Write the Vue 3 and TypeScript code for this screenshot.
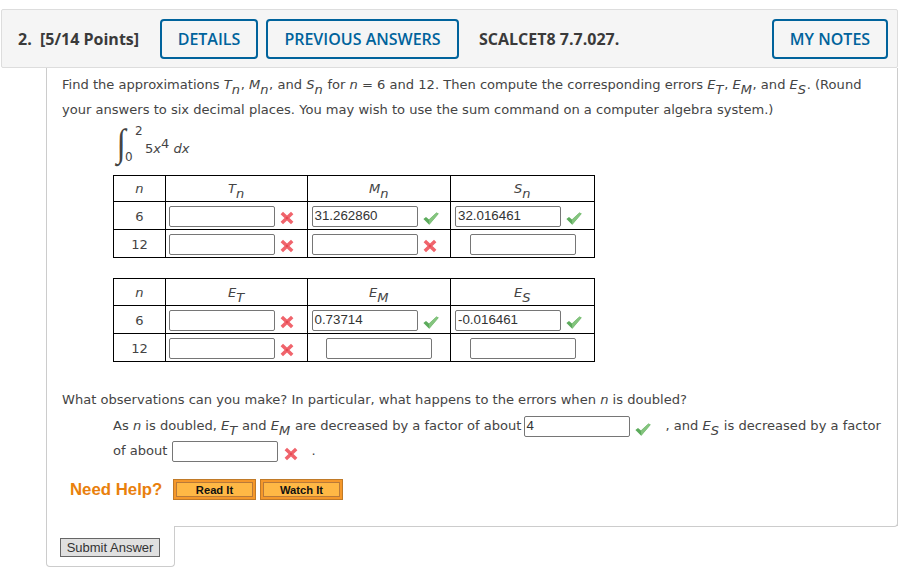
<script setup lang="ts">
type Mark = 'ok' | 'bad' | null

interface Cell {
  value: string
  mark: Mark
}

interface Row {
  n: string
  cells: Cell[]
}

interface Grid {
  heads: [string, string][]
  rows: Row[]
}

const grids: Grid[] = [
  {
    heads: [['T', 'n'], ['M', 'n'], ['S', 'n']],
    rows: [
      { n: '6', cells: [{ value: '', mark: 'bad' }, { value: '31.262860', mark: 'ok' }, { value: '32.016461', mark: 'ok' }] },
      { n: '12', cells: [{ value: '', mark: 'bad' }, { value: '', mark: 'bad' }, { value: '', mark: null }] }
    ]
  },
  {
    heads: [['E', 'T'], ['E', 'M'], ['E', 'S']],
    rows: [
      { n: '6', cells: [{ value: '', mark: 'bad' }, { value: '0.73714', mark: 'ok' }, { value: '-0.016461', mark: 'ok' }] },
      { n: '12', cells: [{ value: '', mark: 'bad' }, { value: '', mark: null }, { value: '', mark: null }] }
    ]
  }
]
</script>

<template>
  <div class="page">
    <header class="head">
      <span class="title">2.&nbsp; [5/14 Points]</span>
      <button class="outline details">DETAILS</button>
      <button class="outline previous">PREVIOUS ANSWERS</button>
      <span class="code">SCALCET8 7.7.027.</span>
      <button class="outline notes">MY NOTES</button>
    </header>

    <section class="content">
      <p class="line first">
        Find the approximations <i>T<sub>n</sub></i>, <i>M<sub>n</sub></i>, and <i>S<sub>n</sub></i> for <i>n</i> = 6 and 12. Then compute the corresponding errors <i>E<sub>T</sub></i>, <i>E<sub>M</sub></i>, and <i>E<sub>S</sub></i>. (Round
      </p>
      <p class="line">your answers to six decimal places. You may wish to use the sum command on a computer algebra system.)</p>

      <div class="integral">
        <span class="sign">∫</span>
        <span class="limits"><span class="upper">2</span><span class="lower">0</span></span>
        <span class="expr">5<i>x</i><sup>4</sup> <i>dx</i></span>
      </div>

      <table v-for="(grid, g) in grids" :key="g" class="grid">
        <colgroup>
          <col class="col-n" />
          <col class="col-t" />
          <col class="col-m" />
          <col class="col-s" />
        </colgroup>
        <thead>
          <tr>
            <th><i>n</i></th>
            <th v-for="h in grid.heads" :key="h[0] + h[1]"><i>{{ h[0] }}<sub>{{ h[1] }}</sub></i></th>
          </tr>
        </thead>
        <tbody>
          <tr v-for="row in grid.rows" :key="row.n">
            <td>{{ row.n }}</td>
            <td v-for="(cell, c) in row.cells" :key="c">
              <span class="answer">
                <span class="field">{{ cell.value }}</span>
                <svg v-if="cell.mark === 'bad'" class="mark cross" width="14" height="14" viewBox="0 0 14 14">
                  <path d="M3 .8 7 4.6 11 .8 13.4 3.2 9.5 7 13.4 10.8 11 13.2 7 9.4 3 13.2.6 10.8 4.5 7 .6 3.2Z" fill="#f0646c" />
                  <path d="M5.4 7 7 5.4 8.6 7 7 8.6Z" fill="#e4474f" />
                </svg>
                <svg v-else-if="cell.mark === 'ok'" class="mark tick" width="16" height="13" viewBox="0 0 16 13">
                  <path d="M.4 7 3 5 6 7.6 13.6.4 15.6 1.8 6.2 12.8Z" fill="#5cab5c" />
                  <path d="M13.6.4 15.6 1.8 6.2 12.8 6 7.6Z" fill="#84c47e" />
                </svg>
              </span>
            </td>
          </tr>
        </tbody>
      </table>

      <p class="line observe">What observations can you make? In particular, what happens to the errors when <i>n</i> is doubled?</p>

      <div class="fill">
        <div class="fill-line">
          As <i>n</i> is doubled, <i>E<sub>T</sub></i> and <i>E<sub>M</sub></i> are decreased by a factor of about
          <span class="answer lead">
            <span class="field">4</span>
            <svg class="mark tick" width="16" height="13" viewBox="0 0 16 13">
              <path d="M.4 7 3 5 6 7.6 13.6.4 15.6 1.8 6.2 12.8Z" fill="#5cab5c" />
              <path d="M13.6.4 15.6 1.8 6.2 12.8 6 7.6Z" fill="#84c47e" />
            </svg>
          </span>
          <span class="after">, and <i>E<sub>S</sub></i> is decreased by a factor</span>
        </div>
        <div class="fill-line">
          of about
          <span class="answer">
            <span class="field">&nbsp;</span>
            <svg class="mark cross" width="14" height="14" viewBox="0 0 14 14">
              <path d="M3 .8 7 4.6 11 .8 13.4 3.2 9.5 7 13.4 10.8 11 13.2 7 9.4 3 13.2.6 10.8 4.5 7 .6 3.2Z" fill="#f0646c" />
              <path d="M5.4 7 7 5.4 8.6 7 7 8.6Z" fill="#e4474f" />
            </svg>
          </span>
          <span class="dot">.</span>
        </div>
      </div>

      <div class="help">
        <span class="need">Need Help?</span>
        <button class="orange read">Read It</button>
        <button class="orange watch">Watch It</button>
      </div>
    </section>

    <footer class="foot">
      <div class="tab"><button class="submit">Submit Answer</button></div>
      <div class="filler"></div>
    </footer>
  </div>
</template>

<style>
html,
body {
  background: #fff;
}
</style>

<style scoped>
.page {
  width: 897px;
  padding: 9px 0 0 1px;
  font-family: "DejaVu Sans", Verdana, sans-serif;
  font-size: 13.07px;
  color: #444;
}

.head {
  display: flex;
  align-items: center;
  height: 59px;
  box-sizing: border-box;
  background: #f5f5f5;
  border: 1px solid #ddd;
  border-radius: 2px;
  font-family: "Open Sans", sans-serif;
  font-size: 16px;
  font-weight: 600;
}

.title {
  margin-left: 16px;
  width: 142px;
  font-weight: 700;
  color: #3a3a3a;
}

.code {
  margin-left: 20px;
  font-weight: 700;
  color: #3a3a3a;
}

.outline {
  height: 40px;
  box-sizing: border-box;
  background: transparent;
  border: 2px solid #00639c;
  border-radius: 4px;
  padding: 0;
  font: inherit;
  color: #00639c;
}

.details {
  width: 98px;
}

.previous {
  width: 193px;
  margin-left: 8px;
}

.notes {
  width: 116px;
  margin-left: auto;
  margin-right: 9px;
}

.content {
  margin-left: 45px;
  border-left: 1px solid #ccc;
  border-right: 1px solid #ccc;
  padding: 1px 0 0 15px;
  height: 458px;
  box-sizing: border-box;
}

.line {
  margin: 0;
  line-height: 25px;
  white-space: nowrap;
}

.first {
  margin-top: 3px;
}

sub {
  padding-right: 0.6px;
  font-size: 13px;
  line-height: 0;
  vertical-align: -5px;
}

sup {
  font-size: 13px;
  line-height: 0;
  vertical-align: 5px;
}

.integral {
  display: flex;
  align-items: center;
  height: 44px;
  margin: 0 0 0 51px;
}

.sign {
  width: 8px;
  margin: -3px 0 0 4px;
  font-family: "Liberation Serif", serif;
  font-size: 30px;
  line-height: 44px;
  transform: scale(1.1, 1.3);
}

.limits {
  display: flex;
  flex-direction: column;
  justify-content: space-between;
  width: 20px;
  height: 38px;
  font-size: 12px;
  line-height: 12px;
}

.upper {
  margin-left: 10px;
}

.expr {
  margin-top: 8px;
}

.grid {
  border-collapse: collapse;
  table-layout: fixed;
  width: 481px;
  margin: 9px 0 0 51px;
  text-align: center;
  color: #444;
}

.grid + .grid {
  margin-top: 20px;
}

.col-n {
  width: 52px;
}

.col-t {
  width: 142px;
}

.col-m {
  width: 143px;
}

.col-s {
  width: 144px;
}

.grid th,
.grid td {
  border: 1px solid #000;
  padding: 0;
  height: 28px;
  font-weight: 400;
  box-sizing: border-box;
}

.grid td {
  padding-top: 2px;
}

.grid th {
  height: 26px;
}

.grid + .grid th {
  height: 27px;
}

.answer {
  display: inline-flex;
  align-items: center;
  vertical-align: middle;
  gap: 6px;
}

.grid .answer {
  gap: 5px;
}

.lead {
  gap: 5px;
  margin-left: -2px;
}

.field {
  display: inline-block;
  width: 106px;
  height: 21px;
  box-sizing: border-box;
  border: 1px solid #767676;
  border-radius: 2px;
  padding: 0 2px;
  background: #fff;
  font-family: "Liberation Sans", Arial, sans-serif;
  font-size: 13.33px;
  line-height: 17px;
  color: #333;
  text-align: left;
}

.mark {
  margin-top: 5px;
}

.grid .mark {
  margin-top: 3px;
}

.grid .cross {
  margin-right: 10px;
}

.grid .tick {
  margin-right: 8px;
}

.observe {
  margin-top: 25px;
}

.fill {
  margin: 1px 0 0 51px;
  white-space: nowrap;
}

.fill-line {
  height: 25px;
  line-height: 25px;
}

.after {
  margin-left: 15px;
}

.dot {
  margin-left: 14px;
}

.help {
  display: flex;
  align-items: center;
  margin: 16px 0 0 8px;
  font-family: "Liberation Sans", Arial, sans-serif;
}

.need {
  width: 103px;
  font-size: 16.8px;
  font-weight: 700;
  color: #e9800c;
}

.orange {
  width: 83px;
  height: 21px;
  box-sizing: border-box;
  padding: 0;
  background: #ffb845;
  border: 1px solid #c07a28;
  outline: 1px solid #b97a3a;
  outline-offset: -4px;
  box-shadow: inset 0 0 0 3px #f5982a;
  font-family: inherit;
  font-size: 11.2px;
  font-weight: 700;
  color: #111;
}

.watch {
  margin-left: 4px;
}

.foot {
  display: flex;
  margin-left: 45px;
}

.tab {
  width: 129px;
  height: 41px;
  box-sizing: border-box;
  border: 1px solid #ccc;
  border-top: 0;
  border-radius: 0 0 4px 4px;
  padding: 12px 0 0 13px;
}

.filler {
  flex: 1;
  height: 5px;
  margin-top: -5px;
  border-right: 1px solid #ccc;
  border-bottom: 1px solid #ccc;
  border-radius: 0 0 4px 0;
  background: #fff;
}

.submit {
  display: block;
  width: 100px;
  height: 19px;
  box-sizing: border-box;
  padding: 0;
  background: #e0e0e0;
  border: 1px solid #666;
  font-family: "Liberation Sans", Arial, sans-serif;
  font-size: 13px;
  color: #333;
}
</style>
